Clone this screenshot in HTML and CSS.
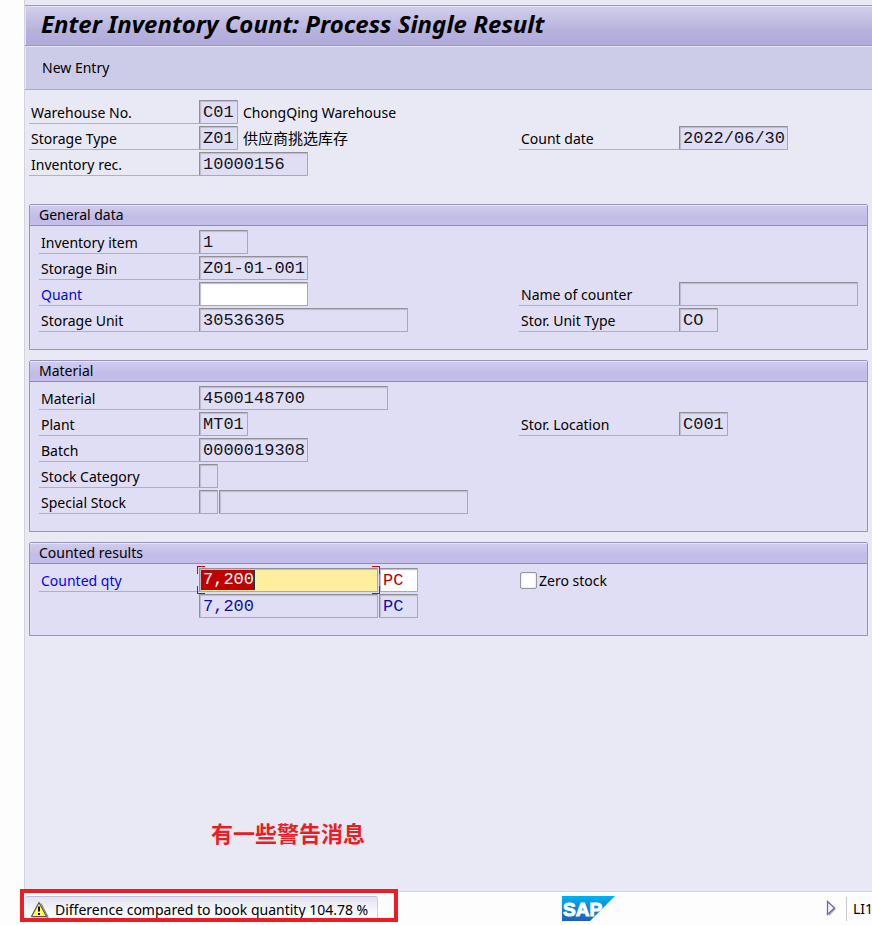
FILE: index.html
```html
<!DOCTYPE html>
<html lang="en">

<head>
    <meta charset="UTF-8" />
    <meta name="viewport" content="width=device-width, initial-scale=1.0" />
    <title>Enter Inventory Count: Process Single Result</title>
    <link rel="stylesheet" href="styles.css">
</head>

<body>
    <main class="window">
        <header class="titlebar">
            <h1>Enter Inventory Count: Process Single Result</h1>
        </header>
        <div class="toolbar">
            <button type="button">New Entry</button>
        </div>

        <form class="screen">
            <div class="rows head-rows">
                <div class="row">
                    <label for="warehouse">Warehouse No.</label>
                    <div class="value">
                        <input id="warehouse" class="w3" value="C01" readonly />
                        <span class="descr">ChongQing Warehouse</span>
                    </div>
                </div>
                <div class="row">
                    <label for="stype">Storage Type</label>
                    <div class="value">
                        <input id="stype" class="w3" value="Z01" readonly />
                        <span class="descr descr-cjk" lang="zh-CN">供应商挑选库存</span>
                    </div>
                    <label for="cdate">Count date</label>
                    <div class="value"><input id="cdate" class="w10" value="2022/06/30" readonly /></div>
                </div>
                <div class="row">
                    <label for="invrec">Inventory rec.</label>
                    <div class="value"><input id="invrec" class="w10" value="10000156" readonly /></div>
                </div>
            </div>

            <section class="group">
                <h2>General data</h2>
                <div class="rows">
                    <div class="row">
                        <label for="item">Inventory item</label>
                        <div class="value"><input id="item" class="w4" value="1" readonly /></div>
                    </div>
                    <div class="row">
                        <label for="bin">Storage Bin</label>
                        <div class="value"><input id="bin" class="w10" value="Z01-01-001" readonly /></div>
                    </div>
                    <div class="row">
                        <label for="quant" class="key">Quant</label>
                        <div class="value"><input id="quant" class="w10 open" value="" /></div>
                        <label for="counter">Name of counter</label>
                        <div class="value"><input id="counter" class="w18" value="" readonly /></div>
                    </div>
                    <div class="row">
                        <label for="unit">Storage Unit</label>
                        <div class="value"><input id="unit" class="w20" value="30536305" readonly /></div>
                        <label for="unittype">Stor. Unit Type</label>
                        <div class="value"><input id="unittype" class="w3" value="CO" readonly /></div>
                    </div>
                </div>
            </section>

            <section class="group">
                <h2>Material</h2>
                <div class="rows">
                    <div class="row">
                        <label for="material">Material</label>
                        <div class="value"><input id="material" class="w19" value="4500148700" readonly /></div>
                    </div>
                    <div class="row">
                        <label for="plant">Plant</label>
                        <div class="value"><input id="plant" class="w4" value="MT01" readonly /></div>
                        <label for="sloc">Stor. Location</label>
                        <div class="value"><input id="sloc" class="w4" value="C001" readonly /></div>
                    </div>
                    <div class="row">
                        <label for="batch">Batch</label>
                        <div class="value"><input id="batch" class="w10" value="0000019308" readonly /></div>
                    </div>
                    <div class="row">
                        <label for="stockcat">Stock Category</label>
                        <div class="value"><input id="stockcat" class="w1" value="" readonly /></div>
                    </div>
                    <div class="row">
                        <label for="special">Special Stock</label>
                        <div class="value">
                            <input id="special" class="w1" value="" readonly />
                            <input class="w25" value="" aria-label="Special stock number" readonly />
                        </div>
                    </div>
                </div>
            </section>

            <section class="group">
                <h2>Counted results</h2>
                <div class="rows">
                    <div class="row">
                        <label for="qty" class="key">Counted qty</label>
                        <div class="value">
                            <div class="focus">
                                <input id="qty" class="w18 open" value="7,200" />
                                <span class="selected" aria-hidden="true">7,200</span>
                                <i class="corner tl"></i><i class="corner tr"></i>
                                <i class="corner bl"></i><i class="corner br"></i>
                            </div>
                            <input class="w3 open changed" value="PC" aria-label="Unit" />
                        </div>
                        <label class="check"><input type="checkbox" />Zero stock</label>
                    </div>
                    <div class="row">
                        <span></span>
                        <div class="value">
                            <input class="w18 total" value="7,200" aria-label="Total quantity" readonly />
                            <input class="w3 total" value="PC" aria-label="Total unit" readonly />
                        </div>
                    </div>
                </div>
            </section>
        </form>
        <p class="note" lang="zh-CN">有一些警告消息</p>
    </main>

    <footer class="statusbar">
        <div class="message">
            <svg width="20" height="18" viewBox="0 0 20 18" aria-hidden="true">
                <path d="M11 2.500l7 13.500-1 1.200H2.500" fill="none" stroke="#8b8b93" stroke-width="1.200" />
                <path d="M9 1.500L1.500 15.500h15z" fill="#ffff4d" stroke="#55555f" stroke-width="1.200" stroke-linejoin="round" />
                <path d="M8 5.500h2v5H8zM8 12h2v2H8z" fill="#111" />
            </svg>
            <span>Difference compared to book quantity 104.78 %</span>
        </div>
        <div class="logo">
            <svg width="53" height="25" viewBox="0 0 53 25" role="img" aria-label="SAP">
                <defs>
                    <linearGradient id="sap" x1="0" y1="0" x2="0" y2="1">
                        <stop offset="0" stop-color="#00b2ee" />
                        <stop offset="1" stop-color="#1c5fc0" />
                    </linearGradient>
                </defs>
                <path d="M0 0h53L28 25H0z" fill="url(#sap)" />
                <text x="1" y="20" class="logo-text">SAP</text>
            </svg>
        </div>
        <button type="button" class="expand" aria-label="Expand">
            <svg width="12" height="17" viewBox="0 0 12 17" aria-hidden="true">
                <path d="M3 3l7 6-7 7z" fill="#a9a9c4" />
                <path d="M1.500 1.500l7 6.500-7 6.500z" fill="#f4f4fc" stroke="#6c6aa6" stroke-width="1.300" />
            </svg>
        </button>
        <div class="system">LI1</div>
        <div class="highlight"></div>
    </footer>
</body>

</html>
```
FILE: styles.css
```css
* {
    box-sizing: border-box;
}

body {
    margin: 0;
    min-height: 100vh;
    display: flex;
    flex-direction: column;
    font: 14px/20px "Noto Sans", "Noto Sans CJK SC", sans-serif;
    color: #000;
    background: #fdfdfe;
    overflow-x: hidden;
}

button {
    font: inherit;
    color: inherit;
    background: none;
    border: 0;
    padding: 0;
}

.window {
    position: relative;
    flex: 1;
    margin-left: 24px;
    padding-top: 5px;
    border-left: 1px solid #d3d2e4;
    border-bottom: 1px solid #d3d2e4;
    background: #e9e9f5;
}

.titlebar {
    height: 41px;
    padding-left: 16px;
    border-top: 1px solid #9c97c0;
    border-bottom: 1px solid #9c97c0;
    box-shadow: inset 1px 1px #e6e4f3;
    background: linear-gradient(#d3d0ec, #b6b1dc 65%, #b1abdb);
}

h1 {
    margin: 0;
    font-size: 24px;
    line-height: 36px;
    font-style: italic;
    white-space: nowrap;
}

.toolbar {
    height: 44px;
    padding: 12px 17px;
    border-bottom: 1px solid #aaa7c8;
    box-shadow: inset 1px 1px #e6e6f4;
    background: #cdcce8;
}

.toolbar button {
    display: block;
}

.screen {
    padding: 10px 4px 0;
}

.rows {
    display: grid;
    gap: 2px;
    padding: 4px 0 17px 9px;
}

.head-rows {
    padding: 0 0 28px;
}

/* label, value, label, value */
.row {
    display: grid;
    grid-template-columns: 160px 320px 160px 1fr;
    height: 24px;
}

.head-rows .row {
    grid-template-columns: 170px 320px 160px 1fr;
}

.row > label {
    padding: 3px 0 0 2px;
    border-bottom: 1px solid #b1b1b8;
    white-space: nowrap;
}

.row > .key {
    color: #00f;
}

.value {
    display: flex;
    gap: 1px;
}

.value input {
    height: 24px;
    padding: 0 2px 0 3px;
    border: 1px solid #a9a9ae;
    border-top-color: #8f8f98;
    border-left-color: #8f8f98;
    border-radius: 1px;
    box-shadow: inset 1px 1px 1px #bcbbcb;
    background: #e0def4;
    font: 17px/20px "Liberation Mono", "Noto Sans CJK SC", monospace;
    color: #14141c;
    outline: 0;
}

.value .open {
    background: #fff;
}

.value .changed {
    color: #b80000;
}

.value .total {
    color: #1010a0;
}

.w1 { width: 19px; }
.w3 { width: 39px; }
.w4 { width: 49px; }
.w10 { width: 109px; }
.w18 { width: 179px; }
.w19 { width: 189px; }
.w20 { width: 209px; }
.w25 { width: 249px; }

.descr {
    padding: 3px 0 0 4px;
    white-space: nowrap;
}

.descr-cjk {
    padding-top: 2px;
    font: 15px/20px "Noto Sans CJK SC", sans-serif;
}

.group {
    margin-bottom: 10px;
    border: 1px solid #9790cb;
    border-radius: 2px 2px 0 0;
    background: #e0def4;
}

h2 {
    margin: 0;
    height: 21px;
    padding-left: 9px;
    border-bottom: 1px solid #9087c4;
    box-shadow: inset 0 1px #e8e6f6;
    background: linear-gradient(#d1cdec, #c2bde8 60%, #c3beea);
    font-size: 14px;
    line-height: 19px;
    font-weight: normal;
}

.focus {
    position: relative;
    display: flex;
}

.value .focus .open {
    background: #ffee9d;
}

/* selected text and caret */
.selected {
    position: absolute;
    left: 2px;
    top: 2px;
    padding-left: 2px;
    border-right: 1px solid #0a3a60;
    background: #bf0000;
    color: #fff;
    font: 17px/20px "Liberation Mono", monospace;
}

.corner {
    position: absolute;
    width: 8px;
    height: 8px;
    border: 0 solid #d80010;
}

.tl { left: -2px; top: -2px; border-width: 1px 0 0 1px; }
.tr { right: -2px; top: -2px; border-width: 1px 1px 0 0; }
.bl { left: -2px; bottom: -2px; border-width: 0 0 1px 1px; }
.br { right: -2px; bottom: -2px; border-width: 0 1px 1px 0; }

.row > .check {
    display: flex;
    align-items: center;
    gap: 2px;
    padding: 1px 0 0 1px;
    border: 0;
}

.check input {
    appearance: none;
    width: 17px;
    height: 17px;
    margin: 0;
    border: 1px solid #96969c;
    border-radius: 2px;
    box-shadow: inset 0 0 2px #c8c8cc;
    background: #fff;
}

.note {
    position: absolute;
    left: 186px;
    bottom: 45px;
    margin: 0;
    font: bold 22px/28px "Noto Sans CJK SC", sans-serif;
    color: #ed1c24;
}

.statusbar {
    position: relative;
    height: 33px;
    padding-left: 25px;
    display: flex;
    align-items: center;
}

.message {
    display: flex;
    align-items: center;
    gap: 5px;
    width: 353px;
    height: 26px;
    padding: 1px 0 0 5px;
    border-top: 1px solid #bfbdd8;
    border-right: 1px solid #cfcee0;
    border-radius: 3px;
    background: linear-gradient(#e3e3f1, #fff 80%);
    white-space: nowrap;
}

.logo {
    margin-left: 184px;
    height: 25px;
}

.logo-text {
    font: bold 19px "Liberation Sans", sans-serif;
    fill: #fff;
    stroke: #fff;
    stroke-width: 1px;
}

.expand {
    margin-left: auto;
    height: 17px;
}

.system {
    width: 26px;
    margin-left: 8px;
    padding: 2px 0 2px 6px;
    border-left: 1px solid #c9c9d2;
    white-space: nowrap;
}

/* red frame around the message */
.highlight {
    position: absolute;
    left: 20px;
    top: -3px;
    width: 378px;
    height: 33px;
    border: 4px solid #ed1c24;
}
```
